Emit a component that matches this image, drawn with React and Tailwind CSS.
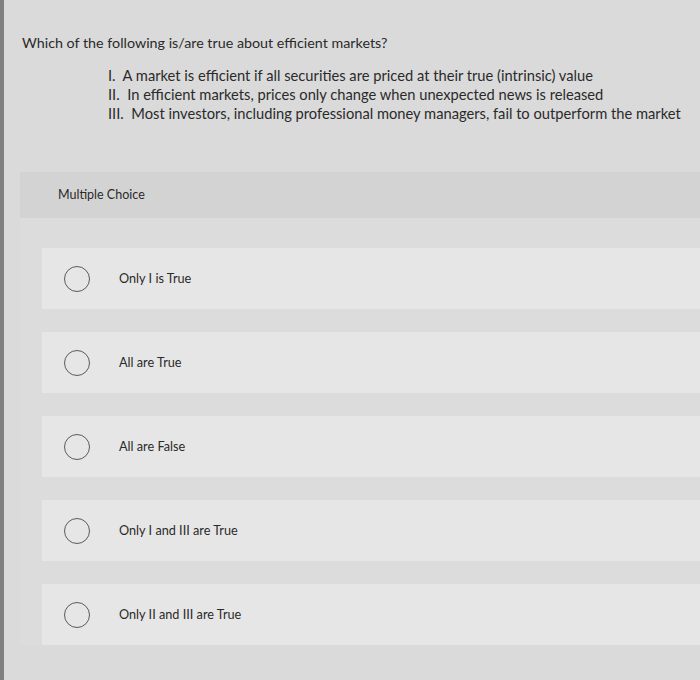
export default function App() {
  const options = [
    "Only I is True",
    "All are True",
    "All are False",
    "Only I and III are True",
    "Only II and III are True",
  ];
  return (
    <div className="w-[700px] h-[680px] overflow-hidden bg-[#dadada] border-l-[4px] border-[#808080] text-[#2a2a2a]" style={{ fontFamily: "Lato, 'Liberation Sans', sans-serif" }}>
      <div className="pt-[33px] pl-[18px] text-[14.3px] leading-[20px]">
        Which of the following is/are true about efficient markets?
      </div>
      <div className="mt-[13px] pl-[104px] text-[14.7px] leading-[19px]">
        <div>I.&nbsp; A market is efficient if all securities are priced at their true (intrinsic) value</div>
        <div>II.&nbsp; In efficient markets, prices only change when unexpected news is released</div>
        <div>III.&nbsp; Most investors, including professional money managers, fail to outperform the market</div>
      </div>
      <div className="mt-[49px] ml-[16px] bg-[#dcdcdc]">
        <div className="h-[46px] flex items-center pl-[38px] bg-[#d3d3d3] text-[12.5px]">Multiple Choice</div>
        <div className="pt-[30px] pl-[22px] flex flex-col gap-[23px]">
          {options.map((o) => (
            <div key={o} className="h-[61px] bg-[#e6e6e6] flex items-center">
              <div className="ml-[22px] w-[26px] h-[26px] rounded-full border-[1.5px] border-[#5a5a5a]" />
              <div className="ml-[29px] text-[12.7px]">{o}</div>
            </div>
          ))}
        </div>
      </div>
    </div>
  );
}
